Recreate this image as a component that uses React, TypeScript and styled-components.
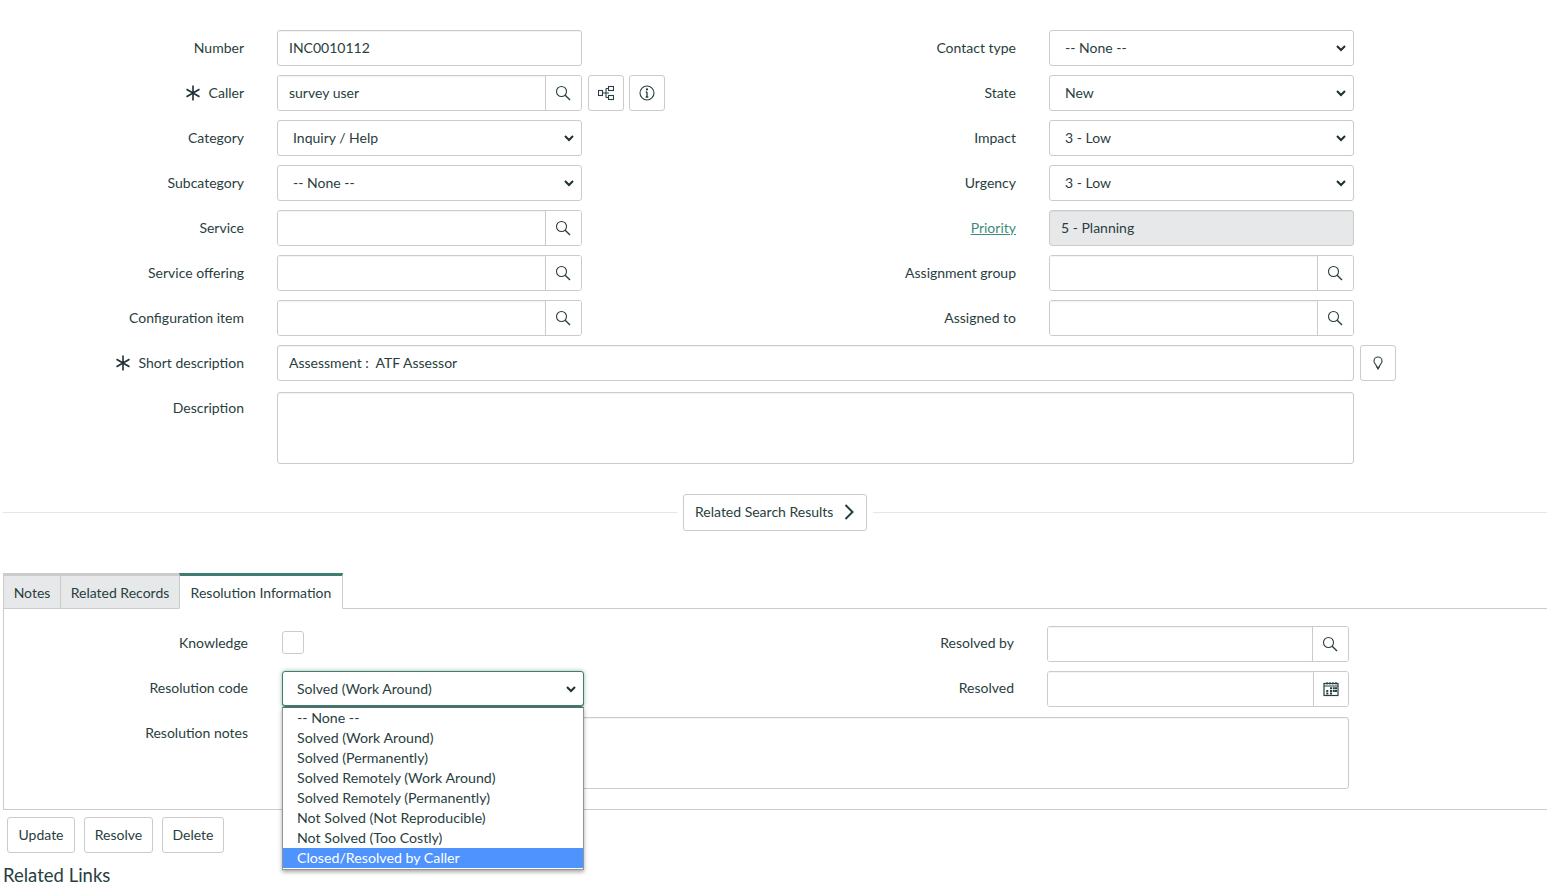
import React from "react";
import styled, { createGlobalStyle } from "styled-components";

const Global = createGlobalStyle`
  html, body { margin: 0; padding: 0; height: 889px; overflow: hidden; background: #fff; }
  body { font-family: "Lato", "Noto Sans", sans-serif; font-size: 14px; color: #293e40; }
  * { box-sizing: border-box; }
`;

const Page = styled.div`
  padding: 30px 11px 0 3px;
`;
const TopForm = styled.div`
  margin-left: -3px;
`;
const Columns = styled.div<{ $col: number }>`
  display: grid;
  grid-template-columns: ${(p) => p.$col}px ${(p) => p.$col}px;
  justify-content: start;
`;
const Stack = styled.div`
  display: flex;
  flex-direction: column;
  gap: 9px;
`;
const Row = styled.div<{ $gap?: number; $mt?: number }>`
  display: flex;
  align-items: flex-start;
  gap: ${(p) => p.$gap ?? 33}px;
  margin-top: ${(p) => p.$mt ?? 0}px;
`;
const Label = styled.label<{ $h?: number }>`
  width: 244px;
  height: ${(p) => p.$h ?? 34}px;
  flex: none;
  display: flex;
  align-items: center;
  justify-content: flex-end;
  gap: 8px;
  text-align: right;
  white-space: nowrap;
`;
const LinkLabel = styled.a`
  color: #3f8a7e;
  text-decoration: underline;
`;
const Star = styled.svg`
  width: 16px;
  height: 16px;
  margin-top: 2px;
  stroke: #1f2f33;
  stroke-width: 1.6;
  fill: none;
`;
const Group = styled.div<{ $w: number }>`
  width: ${(p) => p.$w}px;
  flex: none;
  position: relative;
`;
const TextInput = styled.input<{ $readonly?: boolean }>`
  width: 100%;
  height: 36px;
  display: block;
  padding: 0 11px 2px;
  border: 1px solid #cbcbcb;
  border-radius: 3px;
  font: inherit;
  color: inherit;
  outline: none;
  background: ${(p) => (p.$readonly ? "#e6e8ea" : "#fff")};
  box-shadow: inset 0 1px 1px rgba(0, 0, 0, 0.05);
`;
const Select = styled.select<{ $focus?: boolean }>`
  width: 100%;
  height: 36px;
  display: block;
  padding: 0 24px 2px ${(p) => (p.$focus ? 14 : 15)}px;
  appearance: none;
  border: 1px solid ${(p) => (p.$focus ? "#3f7d70" : "#cbcbcb")};
  border-radius: 3px;
  font: inherit;
  color: inherit;
  background-color: #fff;
  outline: none;
  box-shadow: ${(p) => (p.$focus ? "0 0 4px rgba(63,125,112,.55), inset 0 -1px 0 #3f7d70" : "none")};
`;
const Chevron = styled.svg`
  position: absolute;
  right: 8px;
  top: 15px;
  width: 10px;
  height: 7px;
  fill: none;
  stroke: #1f2f33;
  stroke-width: 2;
  pointer-events: none;
`;
const Lookup = styled.div`
  height: 36px;
  display: flex;
  border: 1px solid #cbcbcb;
  border-radius: 3px;
  background: #fff;
  overflow: hidden;
`;
const LookupInput = styled.input`
  flex: 1;
  min-width: 0;
  border: 0;
  padding: 0 10px 2px 11px;
  font: inherit;
  color: inherit;
  outline: none;
  box-shadow: inset 0 1px 1px rgba(0, 0, 0, 0.05);
`;
const LookupButton = styled.button<{ $w?: number }>`
  width: ${(p) => p.$w ?? 36}px;
  flex: none;
  border: 0;
  border-left: 1px solid #cbcbcb;
  background: #fff;
  padding: 0 1px 0 0;
  display: flex;
  align-items: center;
  justify-content: center;
`;
const IconButton = styled.button`
  width: 36px;
  height: 36px;
  flex: none;
  padding: 0;
  border: 1px solid #cbcbcb;
  border-radius: 3px;
  background: #fff;
  display: flex;
  align-items: center;
  justify-content: center;
`;
const Glyph = styled.svg`
  fill: none;
  stroke: #293e40;
  stroke-width: 1.1;
  display: block;
`;
const TextArea = styled.textarea<{ $w: number }>`
  width: ${(p) => p.$w}px;
  height: 72px;
  display: block;
  flex: none;
  border: 1px solid #cbcbcb;
  border-radius: 3px;
  resize: none;
  outline: none;
  box-shadow: inset 0 1px 1px rgba(0, 0, 0, 0.05);
`;
const DividerRow = styled.div`
  display: flex;
  align-items: center;
  gap: 6px;
  margin-top: 30px;
`;
const DividerLine = styled.div`
  flex: 1;
  height: 1px;
  background: #e4e6e7;
`;
const RelatedButton = styled.button`
  height: 37px;
  width: 184px;
  padding: 0 11px 2px;
  display: flex;
  align-items: center;
  justify-content: space-between;
  border: 1px solid #cbcbcb;
  border-radius: 3px;
  background: #fff;
  font: inherit;
  color: inherit;
  white-space: nowrap;
`;
const TabBar = styled.div`
  display: flex;
  margin-top: 42px;
  margin-bottom: -1px;
  position: relative;
  z-index: 1;
`;
const Tab = styled.div<{ $active?: boolean; $w: number }>`
  width: ${(p) => p.$w}px;
  height: 36px;
  display: flex;
  align-items: center;
  justify-content: center;
  white-space: nowrap;
  border-top: 3px solid ${(p) => (p.$active ? "#3f7d70" : "#c9cbcc")};
  border-bottom: 1px solid ${(p) => (p.$active ? "#fff" : "#cbcbcb")};
  border-left: 1px solid #cbcbcb;
  border-right: ${(p) => (p.$active ? "1px solid #cbcbcb" : "0")};
  background: ${(p) => (p.$active ? "#fff" : "#e6e8ea")};
`;
const Panel = styled.div`
  height: 202px;
  padding-top: 17px;
  border: 1px solid #cbcbcb;
  border-right: 0;
`;
const CheckCell = styled.div`
  height: 36px;
  padding-bottom: 3px;
  display: flex;
  align-items: center;
`;
const Checkbox = styled.span`
  width: 22px;
  height: 23px;
  display: block;
  border: 1px solid #cbcbcb;
  border-radius: 3px;
`;
const NotesRow = styled(Row)`
  margin-top: 10px;
`;
const Dropdown = styled.ul`
  position: absolute;
  top: 36px;
  left: 0;
  right: 0;
  z-index: 5;
  margin: 0;
  padding: 0 0 1px;
  list-style: none;
  background: #fff;
  border: 1px solid #8f9698;
  border-top: 1px solid #5f6769;
  box-shadow: 0 2px 4px rgba(0, 0, 0, 0.35);
`;
const Option = styled.li<{ $selected?: boolean }>`
  height: 20px;
  line-height: 19px;
  padding-left: 14px;
  white-space: nowrap;
  font-size: 14.2px;
  background: ${(p) => (p.$selected ? "#4f93ff" : "transparent")};
  color: ${(p) => (p.$selected ? "#fff" : "inherit")};
`;
const Actions = styled.div`
  display: flex;
  gap: 9px;
  margin: 7px 0 0 4px;
`;
const ActionButton = styled.button<{ $w: number }>`
  width: ${(p) => p.$w}px;
  height: 36px;
  padding: 0 0 2px;
  border: 1px solid #cbcbcb;
  border-radius: 3px;
  background: #fff;
  font: inherit;
  color: inherit;
`;
const SectionTitle = styled.h3`
  margin: 11px 0 0;
  font-size: 18.5px;
  line-height: 22px;
  font-weight: 400;
`;

const SearchIcon = () => (
  <Glyph width="16" height="16" viewBox="0 0 16 16">
    <circle cx="6.5" cy="6.5" r="5" />
    <path d="M10.2 10.2 15 15" strokeWidth="1.4" />
  </Glyph>
);
const TreeIcon = () => (
  <Glyph width="16" height="16" viewBox="0 0 16 16">
    <rect x="0.5" y="5.5" width="4" height="5" />
    <rect x="10.5" y="1.5" width="5" height="4" />
    <rect x="10.5" y="10.5" width="5" height="4" />
    <path d="M4.5 8h3.5M8 3.5V12.5M8 3.5h2.5M8 12.5h2.5M8 8h3" />
  </Glyph>
);
const InfoIcon = () => (
  <Glyph width="16" height="16" viewBox="0 0 16 16">
    <circle cx="8" cy="8" r="7" />
    <path d="M8 7v5M6.7 12h2.6M6.8 7H8" strokeWidth="1.3" />
    <circle cx="8" cy="4.4" r="0.6" fill="#293e40" />
  </Glyph>
);
const BulbIcon = () => (
  <Glyph width="16" height="16" viewBox="0 0 16 16">
    <path d="M5.6 9.4C4.6 8.6 4 7.4 4 6a4 4 0 0 1 8 0c0 1.4-.6 2.6-1.6 3.4L8 14z" />
    <path d="M6.6 12.2h2.8" />
  </Glyph>
);
const CalendarIcon = () => (
  <Glyph width="16" height="16" viewBox="0 0 16 16">
    <rect x="1" y="2.5" width="14" height="12" strokeWidth="1.2" />
    <path d="M1 5h14M4 1v2.5M7 1v2.5M10 1v2.5M13 1v2.5" />
    <path
      d="M7 6.2h2v2H7zM9.8 6.2h2v2H9.8zM12 6.2h2v2h-2zM3.3 9h2v2h-2zM7 9h2v2H7zM9.8 9h2v2H9.8zM12 9h2v2h-2zM3.3 11.6h2v2h-2zM7 11.6h2v2H7z"
      fill="#293e40"
      stroke="none"
    />
  </Glyph>
);
const Required = () => (
  <Star viewBox="0 0 16 16">
    <path d="M8 0.5v15M1.5 4.2l13 7.6M14.5 4.2l-13 7.6" />
  </Star>
);
const SelectChevron = () => (
  <Chevron viewBox="0 0 10 7">
    <path d="M1 1l4 4 4-4" />
  </Chevron>
);

const LookupField = ({ w, value, cal }: { w: number; value?: string; cal?: boolean }) => (
  <Group $w={w}>
    <Lookup>
      <LookupInput defaultValue={value} />
      <LookupButton type="button" $w={cal ? 35 : 36}>
        {cal ? <CalendarIcon /> : <SearchIcon />}
      </LookupButton>
    </Lookup>
  </Group>
);
const SelectField = ({ value }: { value: string }) => (
  <Group $w={305}>
    <Select defaultValue={value}>
      <option>{value}</option>
    </Select>
    <SelectChevron />
  </Group>
);

const resolutionOptions = [
  "-- None --",
  "Solved (Work Around)",
  "Solved (Permanently)",
  "Solved Remotely (Work Around)",
  "Solved Remotely (Permanently)",
  "Not Solved (Not Reproducible)",
  "Not Solved (Too Costly)",
  "Closed/Resolved by Caller",
];

export default function App() {
  return (
    <Page>
      <Global />
      <TopForm>
        <Columns $col={772}>
          <Stack>
            <Row>
              <Label>Number</Label>
              <Group $w={305}>
                <TextInput defaultValue="INC0010112" />
              </Group>
            </Row>
            <Row>
              <Label>
                <Required />
                Caller
              </Label>
              <Row $gap={6}>
                <LookupField w={305} value="survey user" />
                <Row $gap={5}>
                  <IconButton type="button">
                    <TreeIcon />
                  </IconButton>
                  <IconButton type="button">
                    <InfoIcon />
                  </IconButton>
                </Row>
              </Row>
            </Row>
            <Row>
              <Label>Category</Label>
              <SelectField value="Inquiry / Help" />
            </Row>
            <Row>
              <Label>Subcategory</Label>
              <SelectField value="-- None --" />
            </Row>
            <Row>
              <Label>Service</Label>
              <LookupField w={305} />
            </Row>
            <Row>
              <Label>Service offering</Label>
              <LookupField w={305} />
            </Row>
            <Row>
              <Label>Configuration item</Label>
              <LookupField w={305} />
            </Row>
          </Stack>
          <Stack>
            <Row>
              <Label>Contact type</Label>
              <SelectField value="-- None --" />
            </Row>
            <Row>
              <Label>State</Label>
              <SelectField value="New" />
            </Row>
            <Row>
              <Label>Impact</Label>
              <SelectField value="3 - Low" />
            </Row>
            <Row>
              <Label>Urgency</Label>
              <SelectField value="3 - Low" />
            </Row>
            <Row>
              <Label>
                <LinkLabel>Priority</LinkLabel>
              </Label>
              <Group $w={305}>
                <TextInput $readonly readOnly defaultValue="5 - Planning" />
              </Group>
            </Row>
            <Row>
              <Label>Assignment group</Label>
              <LookupField w={305} />
            </Row>
            <Row>
              <Label>Assigned to</Label>
              <LookupField w={305} />
            </Row>
          </Stack>
        </Columns>
        <Row $mt={9}>
          <Label>
            <Required />
            Short description
          </Label>
          <Row $gap={6}>
            <Group $w={1077}>
              <TextInput defaultValue="Assessment :  ATF Assessor" />
            </Group>
            <IconButton type="button">
              <BulbIcon />
            </IconButton>
          </Row>
        </Row>
        <Row $mt={11}>
          <Label $h={30}>Description</Label>
          <TextArea $w={1077} />
        </Row>
      </TopForm>

      <DividerRow>
        <DividerLine />
        <RelatedButton type="button">
          Related Search Results
          <Glyph width="12" height="18" viewBox="0 0 12 18">
            <path d="M2.5 2l7 7-7 7" strokeWidth="2" />
          </Glyph>
        </RelatedButton>
        <DividerLine />
      </DividerRow>

      <TabBar>
        <Tab $w={57}>Notes</Tab>
        <Tab $w={119}>Related Records</Tab>
        <Tab $active $w={164}>
          Resolution Information
        </Tab>
      </TabBar>
      <Panel>
        <Columns $col={766}>
          <Stack>
            <Row $gap={34}>
              <Label $h={32}>Knowledge</Label>
              <CheckCell>
                <Checkbox />
              </CheckCell>
            </Row>
            <Row $gap={34}>
              <Label $h={32}>Resolution code</Label>
              <Group $w={302}>
                <Select $focus defaultValue="Solved (Work Around)">
                  <option>Solved (Work Around)</option>
                </Select>
                <SelectChevron />
                <Dropdown>
                  {resolutionOptions.map((o, i) => (
                    <Option key={o} $selected={i === resolutionOptions.length - 1}>
                      {o}
                    </Option>
                  ))}
                </Dropdown>
              </Group>
            </Row>
          </Stack>
          <Stack>
            <Row>
              <Label $h={32}>Resolved by</Label>
              <LookupField w={302} />
            </Row>
            <Row>
              <Label $h={32}>Resolved</Label>
              <LookupField w={302} cal />
            </Row>
          </Stack>
        </Columns>
        <NotesRow $gap={34}>
          <Label $h={30}>Resolution notes</Label>
          <TextArea $w={1067} />
        </NotesRow>
      </Panel>
      <Actions>
        <ActionButton type="button" $w={68}>
          Update
        </ActionButton>
        <ActionButton type="button" $w={69}>
          Resolve
        </ActionButton>
        <ActionButton type="button" $w={62}>
          Delete
        </ActionButton>
      </Actions>
      <SectionTitle>Related Links</SectionTitle>
    </Page>
  );
}
